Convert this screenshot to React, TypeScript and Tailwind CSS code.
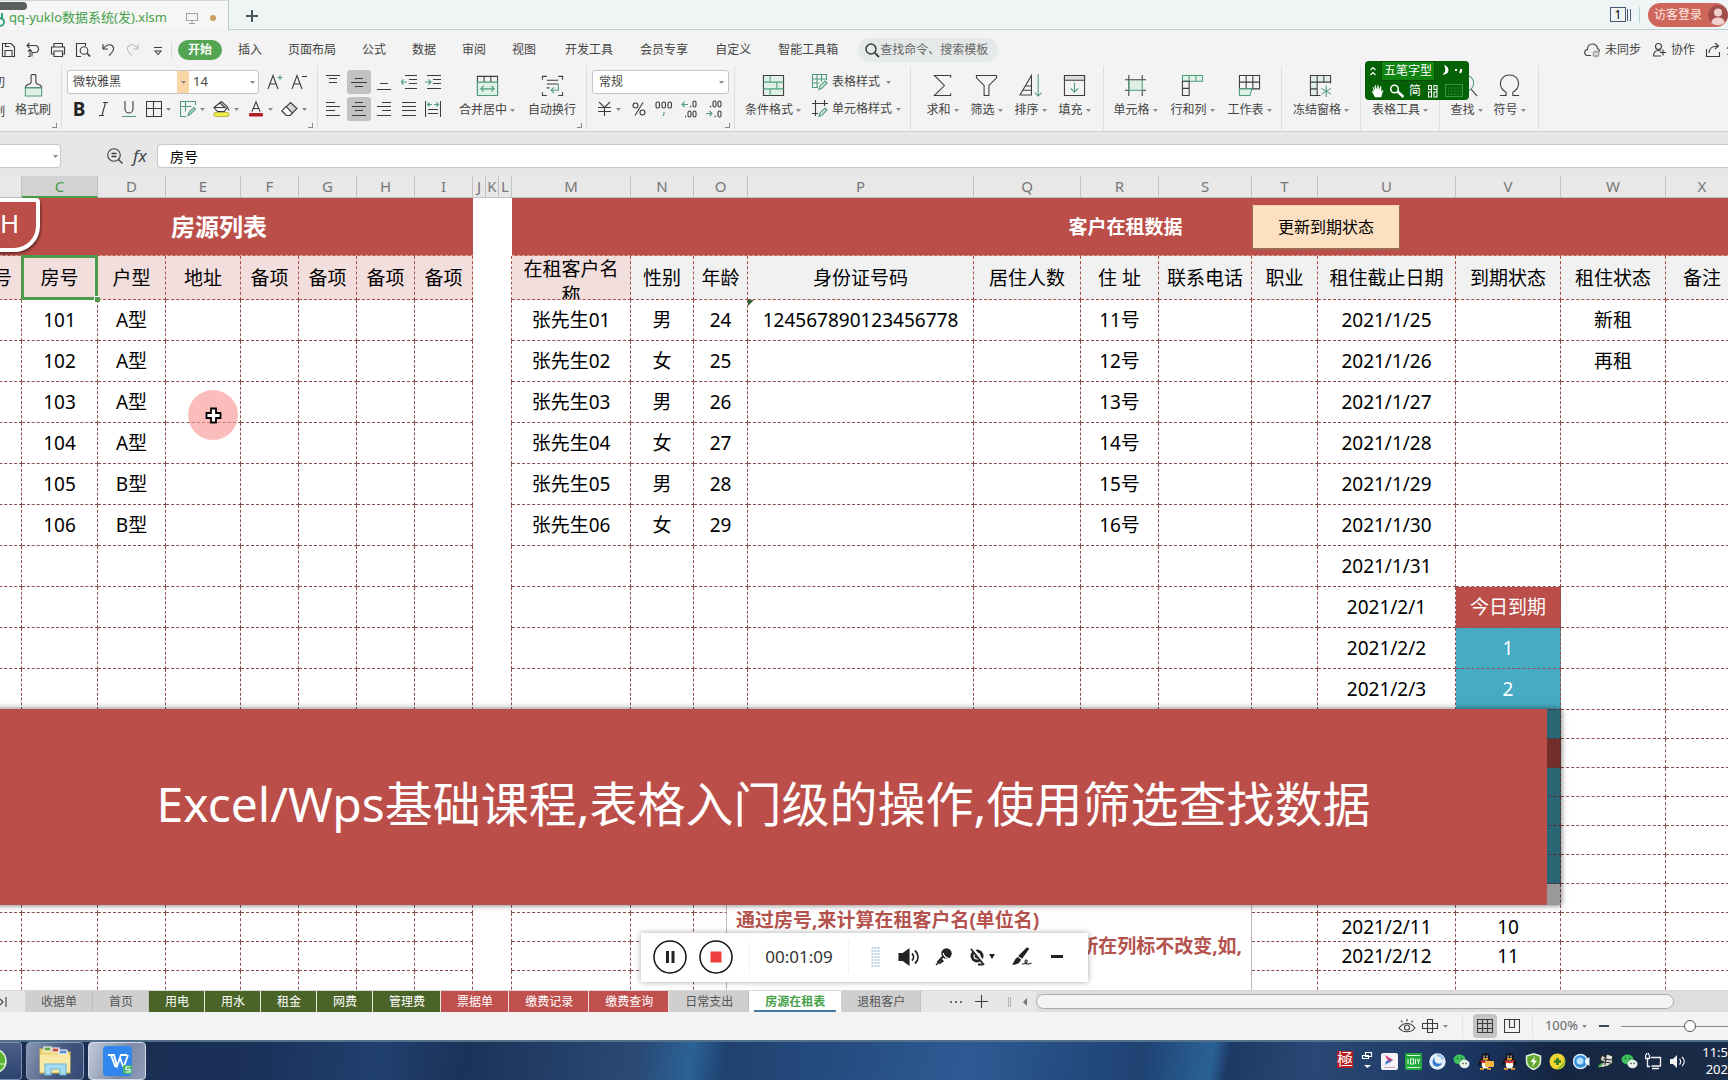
import type { ReactNode } from "react";
import { clsx } from "clsx";

const INK = "#3c3c3c";
const GREEN = "#4f9d7c";
const MINT = "#dff0e6";

type IconProps = {
  w?: number;
  h?: number;
  box?: string;
  className?: string;
  children: ReactNode;
};

function Icon({ w = 16, h = w, box, className, children }: IconProps) {
  return (
    <svg
      width={w}
      height={h}
      viewBox={box ?? `0 0 ${w} ${h}`}
      fill="none"
      stroke={INK}
      strokeWidth={1.1}
      className={clsx("shrink-0", className)}
      aria-hidden="true"
    >
      {children}
    </svg>
  );
}

function Caret({ className }: { className?: string }) {
  return (
    <svg width="5" height="3" viewBox="0 0 5 3" className={clsx("shrink-0", className)} aria-hidden="true">
      <path d="M0 0h5L2.5 3z" fill="#8a8a8a" />
    </svg>
  );
}

/* ---------- title bar ---------- */

function TitleBar() {
  return (
    <header className="relative flex h-[30px] shrink-0 border-b border-[#bfd0d0] bg-[#eff5f5]">
      <div className="flex h-[30px] w-[229px] shrink-0 items-center border-r border-[#b5caca] border-t border-t-[#cfd8d8] bg-[#f5f6f5] pt-1">
        <Icon w={7} h={18}>
          <path d="M2 4v7" stroke="#35a587" strokeWidth={2} />
          <circle cx="0" cy="13" r="4" stroke="#35a587" strokeWidth={2} />
        </Icon>
        <span className="ml-0.5 text-[13px] text-[#45a049]">qq-yuklo数据系统(发).xlsm</span>
        <Icon w={12} h={12} className="ml-auto">
          <path d="M.5 1.500h11v7h-11zM6 8.500v3M3 11.500h6" stroke="#a3a3a3" />
        </Icon>
        <span className="mx-3 h-1.5 w-1.5 rounded-full bg-[#c8a262]" />
      </div>
      <button type="button" aria-label="新建" className="ml-[17px] flex items-center pt-0.5">
        <Icon w={12} h={12}>
          <path d="M6 0v12M0 6h12" stroke="#47575a" strokeWidth={2} />
        </Icon>
      </button>
      <div className="ml-auto flex items-center">
        <span className="flex h-[15px] w-4 items-center justify-center border border-[#47577a] text-[12px] leading-3">1</span>
        <span className="ml-px h-3 w-1 border-x border-[#47577a]" />
        <span className="mx-2 h-4 w-px bg-[#bcd3d6]" />
        <button
          type="button"
          className="flex h-6 w-20 items-center justify-between rounded-full bg-[#ce665c] pl-1.5 text-[12px] text-[#ffe9e2]"
        >
          访客登录
          <Icon w={20} h={20}>
            <circle cx="10" cy="10" r="10" fill="#a14d4b" stroke="none" />
            <circle cx="10" cy="7.500" r="4" fill="#efd0cc" stroke="none" />
            <path d="M3.500 18c0-4 3-5.500 6.500-5.500s6.500 1.500 6.500 5.500c-4 3-9 3-13 0z" fill="#efd0cc" stroke="none" />
          </Icon>
        </button>
      </div>
      <span className="absolute left-0 top-0.5 h-2 w-[27px] rounded-r-md bg-[#5c5e60]" />
    </header>
  );
}

/* ---------- menu row ---------- */

const menusLeft = ["插入", "页面布局", "公式", "数据", "审阅", "视图"];
const menusRight = ["开发工具", "会员专享", "自定义", "智能工具箱"];

function QuickAccess() {
  return (
    <div className="flex w-[172px] shrink-0 items-center gap-[9px] border-r border-[#dcdcdc]">
      <Icon>
        <path d="M2.500 1.500h8.500l3.500 3.500v9.500h-12zM5 14.500v-6h7v6M5.500 1.500v3h4" />
      </Icon>
      <Icon>
        <path d="M2 3.500h8a3.500 3.500 0 0 1 0 7h-3v4M4.500 1l-2.500 2.500L4.500 6M3 9.500l2-2 2 2M5 8v6.500H3" />
      </Icon>
      <Icon>
        <path d="M4 5V1.500h8.500V5M4 12H1.500V5h13v7H12M4 9h8.500v5.500H4z" />
      </Icon>
      <Icon>
        <path d="M6 14.500H1.500v-13h9V4" />
        <circle cx="9" cy="8.500" r="3.800" />
        <path d="M12 11l3 3.500" strokeWidth={1.600} />
      </Icon>
      <Icon>
        <path d="M3 2v5h5M3 7c3-4 7-5.500 9.500-3s.5 6-3.500 9.500" />
      </Icon>
      <Icon>
        <path d="M13 2v5H8M13 7C10 3 6 1.500 3.500 4s-.5 6 3.500 9.500" stroke="#bdbdbd" />
      </Icon>
      <Icon>
        <path d="M4 5.500h8M5 9l3 3.500L11 9z" />
      </Icon>
    </div>
  );
}

function MenuRow() {
  return (
    <nav className="flex h-9 shrink-0 items-center pt-[3px] text-[12px] text-[#444]">
      <QuickAccess />
      <button type="button" className="ml-1.5 h-5 w-11 rounded-full bg-[#53a551] font-bold text-white">
        开始
      </button>
      <div className="ml-4 flex gap-[26px]">
        {menusLeft.map((menu) => (
          <button key={menu} type="button">{menu}</button>
        ))}
      </div>
      <div className="ml-[29px] flex gap-[27px]">
        {menusRight.map((menu) => (
          <button key={menu} type="button">{menu}</button>
        ))}
      </div>
      <label className="ml-5 flex h-6 w-[140px] items-center rounded-full bg-[#e6e9e9] pl-1.5">
        <Icon w={16}>
          <circle cx="7" cy="7" r="5" strokeWidth={1.500} />
          <path d="M11 11l4 4" strokeWidth={1.800} />
        </Icon>
        <input
          type="text"
          aria-label="搜索"
          placeholder="查找命令、搜索模板"
          className="w-[112px] bg-transparent outline-none placeholder:text-[#666]"
        />
      </label>
      <div className="ml-auto flex items-center">
        <Icon w={17} h={16}>
          <path d="M7 13.500H4a3 3 0 0 1-.5-6C3.500 4 5.500 2 8.500 2s5 2 5 4.500c1.500.5 2 2 1.500 3.500" />
          <circle cx="12" cy="12" r="3.500" fill="#a9adb0" stroke="none" />
          <path d="M10 12h4" stroke="#fff" />
        </Icon>
        <button type="button" className="ml-1">未同步</button>
        <Icon w={15} h={16} className="ml-[11px]">
          <circle cx="6.500" cy="4.500" r="3" />
          <path d="M9 14H1.500c0-4 2-5.500 5-5.500 1 0 2 .2 2.500.7M11 7.500v6M8 10.500h6" />
        </Icon>
        <button type="button" className="ml-1">协作</button>
        <button type="button" className="ml-2.5 flex w-[23px] items-center gap-1 overflow-hidden whitespace-nowrap">
          <Icon w={17} h={16}>
            <path d="M1.500 7v7.500h13V10M4 11c0-4 3-7 9-7M10 1l3.500 3L10 7" />
          </Icon>
          分
        </button>
      </div>
    </nav>
  );
}

/* ---------- ribbon ---------- */

function Group({ className, corner, children }: { className: string; corner?: boolean; children: ReactNode }) {
  return (
    <div className={clsx("relative flex h-16 shrink-0 border-r border-[#dedede] pt-1", className)}>
      {children}
      {corner ? <span className="absolute bottom-0.5 right-1 h-[5px] w-[5px] border-b border-r border-[#8a8a8a]" /> : null}
    </div>
  );
}

function BigButton({ label, caret = true, className, children }: { label: string; caret?: boolean; className?: string; children: ReactNode }) {
  return (
    <button type="button" className={clsx("flex h-[52px] shrink-0 flex-col items-center whitespace-nowrap pt-1", className)}>
      <Icon w={23} h={23} box="0 0 24 24">{children}</Icon>
      <span className="mt-[5px] flex h-4 items-center gap-[3px] leading-4">
        {label}
        {caret ? <Caret /> : null}
      </span>
    </button>
  );
}

function Tool({ label, caret, active, className, children }: { label: string; caret?: boolean; active?: boolean; className?: string; children: ReactNode }) {
  return (
    <button
      type="button"
      aria-label={label}
      className={clsx("flex h-6 shrink-0 items-center justify-center gap-1 rounded-[3px]", active && "bg-[#c2c2c2]", className)}
    >
      {children}
      {caret ? <Caret /> : null}
    </button>
  );
}

function Lines({ d }: { d: string }) {
  return (
    <Icon w={16} h={16}>
      <path d={d} />
    </Icon>
  );
}

function FontGroup() {
  return (
    <Group className="w-64 flex-col gap-[3px] pl-[5px]" corner>
      <div className="flex h-6 items-center">
        <div className="relative flex h-6 w-[192px] items-center rounded-[3px] border border-[#c6c6c6] bg-white">
          <select aria-label="字体" className="h-full w-[109px] appearance-none pl-[5px] outline-none">
            <option>微软雅黑</option>
          </select>
          <span className="flex h-full w-3 items-center justify-center bg-[#f9d6a4]">
            <Caret />
          </span>
          <select aria-label="字号" className="h-full flex-1 appearance-none pl-1 text-[13px] outline-none">
            <option>14</option>
          </select>
          <Caret className="mr-[3px]" />
        </div>
        <Tool label="增大字号" className="ml-1 w-6">
          <Icon w={16}>
            <path d="M1 15L6 1.500 11 15M3 10h6" />
            <path d="M13 1v5M10.500 3.500h5" stroke={GREEN} />
          </Icon>
        </Tool>
        <Tool label="减小字号" className="w-6">
          <Icon w={16}>
            <path d="M1 15L6 1.500 11 15M3 10h6" />
            <path d="M11 2.500h5" stroke={INK} />
          </Icon>
        </Tool>
      </div>
      <div className="flex h-6 items-center">
        <Tool label="加粗" className="w-6">
          <span className="text-[19px] font-bold leading-none text-[#222]">B</span>
        </Tool>
        <Tool label="倾斜" className="w-[26px]">
          <Icon w={14} h={16}>
            <path d="M6 1.500h5M2 14.500h5M8.500 1.500L5 14.500" />
          </Icon>
        </Tool>
        <Tool label="下划线" className="w-6">
          <Icon w={16} h={16}>
            <path d="M4 0v7.500a4 4.500 0 0 0 8 0V0" />
            <path d="M1 15.500h14" stroke={GREEN} />
          </Icon>
        </Tool>
        <Tool label="边框" caret className="w-[34px]">
          <Icon w={16}>
            <path d="M.5.500h15v15H.5zM7.500.5v15M.5 7.500h15" />
          </Icon>
        </Tool>
        <Tool label="绘图边框" caret className="w-[34px]">
          <Icon w={16}>
            <path d="M15.500 4V.5H.5v15H6M.5 5.500h11M5.500.5v10" stroke={GREEN} />
            <path d="M8 14.500l1-3 5-5 1.500 1.500-5 5z" fill={MINT} stroke={GREEN} />
          </Icon>
        </Tool>
        <Tool label="填充颜色" caret className="w-[34px]">
          <Icon w={17} h={16}>
            <path d="M1 6.500h11L6.500 1.500M1 6.500l7.500-6L14.500 6l-3 4.500h-7z" />
            <path d="M14.500 6.500l1.500 3" />
            <rect x="1" y="11.500" width="15" height="4" rx="1.500" fill="#f0ea45" stroke="#a7a63c" strokeWidth={0.800} />
          </Icon>
        </Tool>
        <Tool label="字体颜色" caret className="w-[34px]">
          <Icon w={16}>
            <path d="M4 10.500L8 .800l4 9.700M5.500 7.500h5" />
            <rect x="1" y="12" width="14" height="3.500" rx="1" fill="#b51f24" stroke="none" />
          </Icon>
        </Tool>
        <Tool label="清除" caret className="w-[34px]">
          <Icon w={17} h={16}>
            <path d="M9.500 1.500l6.500 6-7 7H5.500l-4.500-4.500z" fill="#d6d6d6" />
            <path d="M1 10L5 5.500l6.500 6.500-2.500 2.500H5.500z" fill="#fff" />
          </Icon>
        </Tool>
      </div>
    </Group>
  );
}

function AlignGroup() {
  return (
    <Group className="w-[269px]" corner>
      <div className="grid grid-cols-[29px_24px_25px_25px_24px] content-start gap-y-[3px]">
        <Tool label="顶端对齐"><Lines d="M1 1.500h14M4 4.500h8M4 8.500h8" /></Tool>
        <Tool label="垂直居中" active><Lines d="M4 4.500h8M0 8.500h16M4 12.500h8" /></Tool>
        <Tool label="底端对齐"><Lines d="M4 9.500h8M4 11.500h0M1 15.500h14" /></Tool>
        <Tool label="减少缩进">
          <Icon w={16}>
            <path d="M4 1.500h12M8 5.500h8M8 9.500h8M4 14.500h12" />
            <path d="M6 8H0M2.500 5.500L0 8l2.500 2.500" stroke={GREEN} />
          </Icon>
        </Tool>
        <Tool label="增加缩进">
          <Icon w={16}>
            <path d="M2 1.500h14M8 5.500h8M8 9.500h8M2 14.500h14" />
            <path d="M0 8h6M3.500 5.500L6 8l-2.500 2.500" stroke={GREEN} />
          </Icon>
        </Tool>
        <Tool label="左对齐"><Lines d="M1 1.500h9M1 5.500h14M1 9.500h9M1 14.500h14" /></Tool>
        <Tool label="水平居中" active><Lines d="M4 1.500h8M1 5.500h14M4 9.500h8M1 14.500h14" /></Tool>
        <Tool label="右对齐"><Lines d="M6 1.500h9M1 5.500h14M6 9.500h9M1 14.500h14" /></Tool>
        <Tool label="两端对齐"><Lines d="M1 1.500h14M1 5.500h14M1 9.500h14M1 14.500h14" /></Tool>
        <Tool label="分散对齐">
          <Icon w={16}>
            <path d="M.500 0v16M15.500 0v16M3 8.500h10M3 12.500h10" />
            <path d="M2.500 3.500H7M9 3.500h4.500M4.500 1.500l-2 2 2 2M11.500 1.500l2 2-2 2" stroke={GREEN} />
          </Icon>
        </Tool>
      </div>
      <BigButton label="合并居中" className="ml-2.5 w-16">
        <path d="M1.500 2.500h21v20h-21zM8.500 2.500v6M15.500 2.500v6" />
        <path d="M1.500 8.500h21v14h-21z" fill={MINT} stroke={GREEN} />
        <path d="M5 15.500h14M8 12.500l-3 3 3 3M16 12.500l3 3-3 3" stroke={GREEN} />
      </BigButton>
      <BigButton label="自动换行" caret={false} className="ml-1.5 w-[54px]">
        <path d="M6 2.500H1.500V6M18 2.500h4.500V6M6 22.500H1.500V19M18 22.500h4.500V19M6 6.500h12M6 10.500h12M6 14.500h3" />
        <path d="M18 10.500v6.500h-7M13.500 14L10.500 17l3 3" stroke={GREEN} />
      </BigButton>
    </Group>
  );
}

function NumberGroup() {
  return (
    <Group className="w-[148px] flex-col gap-[3px] pl-[5px]" corner>
      <div className="flex h-6 w-[137px] items-center rounded-[3px] border border-[#c6c6c6] bg-white pr-1">
        <select aria-label="数字格式" className="h-full flex-1 appearance-none pl-1.5 outline-none">
          <option>常规</option>
        </select>
        <Caret />
      </div>
      <div className="flex h-6 items-center">
        <Tool label="货币" caret className="w-[34px]">
          <Icon w={15} h={16}>
            <path d="M2 1l5.500 5.500L13 1M1 6.500h13M1 10.500h13M7.500 6.500V15" />
          </Icon>
        </Tool>
        <Tool label="百分比" className="w-[26px]">
          <Icon w={14} h={16}>
            <circle cx="3.500" cy="4.500" r="2.500" />
            <circle cx="10.500" cy="11.500" r="2.500" />
            <path d="M11 1.500L3 14.500" />
          </Icon>
        </Tool>
        <Tool label="千位分隔" className="w-6">
          <Icon w={18} h={16}>
            <rect x="1" y="1" width="3.500" height="6" rx="1.500" />
            <rect x="7" y="1" width="3.500" height="6" rx="1.500" />
            <rect x="13" y="1" width="3.500" height="6" rx="1.500" />
            <path d="M9 11v2l-1 2" stroke={GREEN} />
          </Icon>
        </Tool>
        <Tool label="增加小数" className="w-[26px]">
          <Icon w={17} h={18}>
            <path d="M7 4.500H1M3.500 2L1 4.500 3.500 7" stroke={GREEN} />
            <rect x="12" y="1" width="3" height="6" rx="1.500" />
            <rect x="7" y="11" width="3" height="6" rx="1.500" />
            <rect x="12" y="11" width="3" height="6" rx="1.500" />
            <path d="M9 6.500h1.200M4 16.500h1.200" strokeWidth={1.500} />
          </Icon>
        </Tool>
        <Tool label="减少小数" className="w-6">
          <Icon w={17} h={18}>
            <path d="M0 13.500h6M3.500 11L6 13.500 3.500 16" stroke={GREEN} />
            <rect x="7" y="1" width="3" height="6" rx="1.500" />
            <rect x="12" y="1" width="3" height="6" rx="1.500" />
            <rect x="12" y="11" width="3" height="6" rx="1.500" />
            <path d="M4 6.500h1.200M8.500 16.500h1.200" strokeWidth={1.500} />
          </Icon>
        </Tool>
      </div>
    </Group>
  );
}

function Ribbon() {
  return (
    <section className="flex h-[66px] shrink-0 items-start overflow-hidden border-b border-[#cfcfcf] text-[12px] text-[#444]">
      <Group className="w-[62px]" corner>
        <div className="flex w-[5px] flex-col justify-between overflow-hidden pb-2.5 pt-[5px] leading-4">
          <span className="flex justify-end">切</span>
          <span className="flex justify-end">制</span>
        </div>
        <BigButton label="格式刷" caret={false} className="ml-2.5 w-9">
          <path d="M3.500 14.500c0-2 1-3 3-3.500 2-.5 3-1 3-3V1.500C9.500 0 14.500 0 14.500 1.500V8c0 2 1 2.500 3 3s3 1.500 3 3.500z" />
          <path d="M3.500 14.500h17v8.500h-17z" fill={MINT} stroke={GREEN} />
        </BigButton>
      </Group>
      <FontGroup />
      <AlignGroup />
      <NumberGroup />
      <Group className="w-44 pl-2">
        <BigButton label="条件格式" className="w-[60px]">
          <path d="M1.500 1.500h21v21h-21z" fill={MINT} />
          <path d="M1.500 8.500h21M1.500 15.500h21M8.500 1.500v7M15.500 8.500v7M8.500 15.500v7" stroke={GREEN} />
        </BigButton>
        <div className="ml-2 flex flex-col gap-[3px]">
          <button type="button" className="flex h-6 items-center gap-1">
            <Icon w={17} h={18}>
              <path d="M15.500 7V1.500H1.500v13H7M1.500 6h14M1.500 10h7M6 1.500v13M10.500 1.500v7" stroke={GREEN} />
              <path d="M8 16.500l1-3.500 5-5 2 2-5 5z" fill={MINT} stroke={GREEN} />
            </Icon>
            表格样式
            <Caret className="ml-0.5" />
          </button>
          <button type="button" className="flex h-6 items-center gap-1">
            <Icon w={17} h={18}>
              <path d="M4.500 0v16M1 3.500h16M13.500 0v6M1 13.500h6" />
              <path d="M8 16.500l1-3.500 5-5 2 2-5 5z" fill={MINT} stroke={GREEN} />
            </Icon>
            单元格样式
            <Caret />
          </button>
        </div>
      </Group>
      <Group className="w-[193px] gap-[11px] pl-[15px]">
        <BigButton label="求和" className="w-[33px]">
          <path d="M20.500 4V1.500H3.500L14 12 3.500 22.500h17V20" />
        </BigButton>
        <BigButton label="筛选" className="w-[33px]">
          <path d="M1.500 1.500h21V4l-8 8v10.500h-5V12l-8-8z" />
        </BigButton>
        <BigButton label="排序" className="w-[33px]">
          <path d="M1 22L13 1.500V22zM6.500 12.500H13M4 17h9" />
          <path d="M20 0v23M16.500 19.500L20 23l3.500-3.500" stroke={GREEN} />
        </BigButton>
        <BigButton label="填充" className="w-[33px]">
          <path d="M1.500 1.500h21v21h-21z" />
          <path d="M1.500 1.500h21v5h-21z" fill="#dcdcdc" />
          <path d="M12 9v10M8 15l4 4 4-4" stroke={GREEN} />
        </BigButton>
      </Group>
      <Group className="w-[178px] gap-3 pl-[9px]">
        <BigButton label="单元格" className="w-[45px]">
          <path d="M5 6h14v11H5z" fill={MINT} stroke="none" />
          <path d="M5 1v22M19 1v5M19 17v6M1 6h22M1 17h4M19 17h4" />
          <path d="M5 6v11h14V6" stroke={GREEN} />
        </BigButton>
        <BigButton label="行和列" className="w-[45px]">
          <path d="M1.500 1.500h21v6h-21z" fill={MINT} stroke={GREEN} />
          <path d="M8.500 1.500v6M15.500 1.500v6" stroke={GREEN} />
          <path d="M1.500 7.500h7v15h-7zM1.500 15h7" />
        </BigButton>
        <BigButton label="工作表" className="w-[45px]">
          <path d="M1.500 1.500h21v14h-21zM1.500 8.500h21M8.500 1.500v14M15.500 1.500v14" />
          <path d="M1.500 15.500h13l-2 7h-11z" fill={MINT} stroke={GREEN} />
        </BigButton>
      </Group>
      <Group className="w-[79px] justify-center">
        <BigButton label="冻结窗格">
          <path d="M1.500 1.500h21v7H8.500v14h-7z" fill={MINT} stroke="none" />
          <path d="M22.500 10v-8.500h-21v21H12M1.500 8.500h21M8.500 1.500v21M15.500 1.500v7M1.500 15.500h7" />
          <path d="M18 12v12M13 15l10 6M23 15l-10 6" stroke={GREEN} />
        </BigButton>
      </Group>
      <Group className="w-[79px] justify-center">
        <BigButton label="表格工具">
          <path d="M1.500 1.500h21v21h-21zM1.500 8.500h21M8.500 1.500v21" />
        </BigButton>
      </Group>
      <Group className="w-[99px] gap-2.5 pl-2.5">
        <BigButton label="查找" className="w-[33px]">
          <circle cx="11" cy="9.500" r="8.500" stroke={GREEN} />
          <path d="M17 16l6 7" />
        </BigButton>
        <BigButton label="符号" className="w-[33px]">
          <path d="M2 22.500h6.500V19C4.500 17 2.500 14 2.500 10 2.500 4.500 6.500 1 12 1s9.500 3.500 9.500 9c0 4-2 7-6 9v3.500H22" />
        </BigButton>
      </Group>
    </section>
  );
}

/* Floating input-method bar */
function InputMethodBar() {
  return (
    <aside className="absolute left-[1365px] top-[61px] h-[39px] w-[104px] rounded-sm bg-[#056105] text-[12px] text-white">
      <div className="flex h-5 items-center">
        <Icon w={16} h={14}>
          <path d="M5.500 6L8 3.500 10.500 6M5.500 11L8 8.500l2.500 2.500" stroke="#fff" />
        </Icon>
        <span className="flex h-5 w-[54px] items-center justify-center border border-[#0a4d0a] bg-[#118411]">五笔字型</span>
        <Icon w={32} h={14}>
          <path d="M10 2c4 2 4 7-1 8 2-2 2.500-5 1-8z" fill="#fff" stroke="#fff" />
          <path d="M20 6h2M26 5v2l-1 2" stroke="#fff" strokeWidth={2} />
        </Icon>
      </div>
      <div className="flex h-[19px] items-center gap-1 pl-1.5">
        <Icon w={14} h={14}>
          <path d="M4 13L1 7l2 1-1-5 2 4V1l2 5 1-5 1 5 2-4v6l2-2-2 7z" fill="#fff" stroke="#fff" strokeWidth={0.500} />
        </Icon>
        <Icon w={16} h={14}>
          <circle cx="5.500" cy="5" r="3.800" stroke="#fff" strokeWidth={1.500} />
          <path d="M8.500 7.500L14.500 13" stroke="#fff" strokeWidth={2.500} />
        </Icon>
        <span className="leading-none">简</span>
        <Icon w={12} h={14} className="ml-0.5">
          <path d="M1.500 1.500h3v4h-3zM7 1.500h3v4H7zM1.500 8h3v5h-3zM7 8h3v5H7zM4.500 5.500V8M10 5.500V8" stroke="#fff" />
        </Icon>
        <Icon w={18} h={13} className="ml-0.5">
          <path d="M.5.500h17v12H.5z" stroke="#2f9a3c" />
          <path d="M3 4h13M3 7h13M3 10h13" stroke="#2f9a3c" strokeDasharray="1.500 1.500" />
        </Icon>
      </div>
    </aside>
  );
}

/* ---------- formula bar ---------- */

function FormulaBar() {
  return (
    <div className="flex h-11 shrink-0 items-start bg-[#e7e7e7] pt-3">
      <div className="flex h-6 w-[61px] items-center justify-end rounded-r border border-l-0 border-[#c8c8c8] bg-white pr-0.5">
        <Caret />
      </div>
      <Icon w={18} h={24} className="ml-[45px]">
        <circle cx="8" cy="11" r="6.300" />
        <path d="M5.500 9.500h5M5.500 12.500h5M12.500 15.500l4 4" strokeWidth={1.400} />
      </Icon>
      <span className="ml-[9px] w-6 text-[17px] italic leading-6 text-[#444]">fx</span>
      <input
        type="text"
        aria-label="编辑栏"
        defaultValue="房号"
        className="h-6 min-w-0 flex-1 rounded-l border border-r-0 border-[#c8c8c8] bg-white pl-3 text-[14px] text-black outline-none"
      />
    </div>
  );
}

/* ---------- sheet ---------- */

const columns: { id: string; width: string }[] = [
  { id: "B", width: "w-[57px]" },
  { id: "C", width: "w-[76px]" },
  { id: "D", width: "w-[68px]" },
  { id: "E", width: "w-[75px]" },
  { id: "F", width: "w-[58px]" },
  { id: "G", width: "w-[58px]" },
  { id: "H", width: "w-[58px]" },
  { id: "I", width: "w-[58px]" },
  { id: "J", width: "w-[13px]" },
  { id: "K", width: "w-[13px]" },
  { id: "L", width: "w-[13px]" },
  { id: "M", width: "w-[119px]" },
  { id: "N", width: "w-[63px]" },
  { id: "O", width: "w-[54px]" },
  { id: "P", width: "w-[226px]" },
  { id: "Q", width: "w-[107px]" },
  { id: "R", width: "w-[78px]" },
  { id: "S", width: "w-[93px]" },
  { id: "T", width: "w-[66px]" },
  { id: "U", width: "w-[138px]" },
  { id: "V", width: "w-[105px]" },
  { id: "W", width: "w-[105px]" },
  { id: "X", width: "w-[73px]" },
];

const headings: Record<string, string> = {
  B: "号",
  C: "房号",
  D: "户型",
  E: "地址",
  F: "备项",
  G: "备项",
  H: "备项",
  I: "备项",
  M: "在租客户名称",
  N: "性别",
  O: "年龄",
  P: "身份证号码",
  Q: "居住人数",
  R: "住 址",
  S: "联系电话",
  T: "职业",
  U: "租住截止日期",
  V: "到期状态",
  W: "租住状态",
  X: "备注",
};

type Row = Record<string, string>;

const tallRows: Row[] = [
  { C: "101", D: "A型", M: "张先生01", N: "男", O: "24", P: "124567890123456778", R: "11号", U: "2021/1/25", W: "新租" },
  { C: "102", D: "A型", M: "张先生02", N: "女", O: "25", R: "12号", U: "2021/1/26", W: "再租" },
  { C: "103", D: "A型", M: "张先生03", N: "男", O: "26", R: "13号", U: "2021/1/27" },
  { C: "104", D: "A型", M: "张先生04", N: "女", O: "27", R: "14号", U: "2021/1/28" },
  { C: "105", D: "B型", M: "张先生05", N: "男", O: "28", R: "15号", U: "2021/1/29" },
  { C: "106", D: "B型", M: "张先生06", N: "女", O: "29", R: "16号", U: "2021/1/30" },
  { U: "2021/1/31" },
  { U: "2021/2/1", V: "今日到期", fill: "red" },
  { U: "2021/2/2", V: "1", fill: "teal" },
  { U: "2021/2/3", V: "2", fill: "teal" },
];

const shortRows: Row[] = [
  { fill: "teal" },
  { fill: "red" },
  { fill: "teal" },
  { fill: "teal" },
  { fill: "teal" },
  { fill: "teal" },
  { U: "2021/2/10" },
  { U: "2021/2/11", V: "10" },
  { U: "2021/2/12", V: "11" },
  {},
];

const isGap = (id: string) => id === "J" || id === "K" || id === "L";

function BodyRow({ row, tall }: { row: Row; tall?: boolean }) {
  return (
    <tr className={tall ? "h-[41px]" : "h-[29px]"}>
      {columns.map(({ id }) => (
        <td
          key={id}
          className={clsx(
            "border-dashed border-[#8d4f4d] p-0 text-center",
            !isGap(id) && "border-b border-r",
            id === "L" && "border-r",
            id === "P" && row.P && "relative",
            id === "V" && row.fill === "red" && "bg-[#bc4e49] text-white",
            id === "V" && row.fill === "teal" && "bg-[#48abc4] text-white",
          )}
        >
          {id === "P" && row.P ? (
            <svg width="6" height="6" viewBox="0 0 6 6" className="absolute left-0 top-0" aria-hidden="true">
              <path d="M0 0h6L0 6z" fill="#2c6a32" />
            </svg>
          ) : null}
          {row[id]}
        </td>
      ))}
    </tr>
  );
}

function SheetTable() {
  return (
    <table className="-ml-[35px] w-[1774px] table-fixed border-separate border-spacing-0 text-[19px] leading-6 text-black">
      <colgroup>
        {columns.map(({ id, width }) => (
          <col key={id} className={width} />
        ))}
      </colgroup>
      <thead>
        <tr className="h-[22px] text-[15px] leading-5 text-[#777]">
          {columns.map(({ id }) => (
            <th
              key={id}
              scope="col"
              className={clsx(
                "border-b border-r border-[#c2c2c2] p-0 align-top font-normal",
                id === "C" ? "border-b-2 border-b-[#4b9a49] bg-[#d2d2d2] text-[#459a48]" : "bg-[#e8e8e8]",
              )}
            >
              {id === "B" ? null : id}
            </th>
          ))}
        </tr>
      </thead>
      <tbody>
        <tr className="h-[58px] bg-[#bc4e49] text-white">
          <th colSpan={8} className="border-b border-dashed border-[#d9a19e] p-0 text-[24px]">房源列表</th>
          <td colSpan={3} className="bg-white p-0" />
          <th colSpan={12} className="border-b border-dashed border-[#d9a19e] p-0">客户在租数据</th>
        </tr>
        <tr className="h-11">
          {columns.map(({ id }, index) => (
            <th
              key={id}
              className={clsx(
                "border-dashed border-[#a8504d] p-0 font-normal",
                !isGap(id) && "border-b border-r",
                id === "L" && "border-r",
                (index < 8 || id === "M") && "bg-[#f2dedc]",
                index > 11 && "bg-[#f1f1f2]",
                id === "C" && "relative",
                id === "B" && "pr-[9px] text-right",
              )}
            >
              {id === "M" ? <div className="h-[43px] overflow-hidden px-2 leading-[26px]">{headings.M}</div> : headings[id]}
              {id === "C" ? (
                <>
                  <span className="absolute -inset-px border-[3px] border-[#4f9a4d]" />
                  <span className="absolute -bottom-[3px] -right-[3px] h-[6px] w-[6px] border-l border-t border-white bg-[#4f9a4d]" />
                </>
              ) : null}
            </th>
          ))}
        </tr>
        {tallRows.map((row, index) => (
          <BodyRow key={index} row={row} tall />
        ))}
        {shortRows.map((row, index) => (
          <BodyRow key={index} row={row} />
        ))}
      </tbody>
    </table>
  );
}

function Recorder() {
  return (
    <div className="absolute left-[641px] top-[757px] flex h-[49px] w-[447px] items-center bg-white pb-0.5 pl-3 shadow-[0_0_6px_rgba(0,0,0,0.35)]">
      <button type="button" aria-label="暂停">
        <Icon w={34} h={34}>
          <circle cx="17" cy="17" r="16" stroke="#111" strokeWidth={1.500} />
          <path d="M14.500 11v12M20 11v12" stroke="#222" strokeWidth={3} />
        </Icon>
      </button>
      <button type="button" aria-label="停止" className="ml-3">
        <Icon w={34} h={34}>
          <circle cx="17" cy="17" r="16" stroke="#111" strokeWidth={1.500} />
          <rect x="11.500" y="11.500" width="11" height="11" fill="#ee3f3f" stroke="none" />
        </Icon>
      </button>
      <span className="ml-4 flex h-8 w-[100px] items-center justify-center border-x border-[#f2f2f2] text-[17px] text-[#333]">
        00:01:09
      </span>
      <Icon w={9} h={20} className="ml-[22px]">
        <path d="M1.500 0v20M4.500 0v20M7.500 0v20" stroke="#bcd3e3" strokeWidth={2} strokeDasharray="2 1" />
      </Icon>
      <button type="button" aria-label="扬声器" className="ml-[18px]">
        <Icon w={22} h={20}>
          <path d="M1 6.500h4L11 2v16l-6-4.500H1z" fill="#222" stroke="#222" />
          <path d="M14 6.500c2 2 2 5 0 7M17 3.500c4 4 4 9 0 13" stroke="#222" strokeWidth={1.800} />
        </Icon>
      </button>
      <button type="button" aria-label="麦克风" className="ml-3.5">
        <Icon w={20} h={20}>
          <circle cx="12.500" cy="6.500" r="5.200" fill="#222" stroke="none" />
          <path d="M9 6c1 3 3 5 6 5.500" stroke="#fff" />
          <path d="M9 9.500L3.500 15.500M6.500 12l2 2-3.500 2.500" stroke="#222" strokeWidth={2} />
          <path d="M2 18l3-3" stroke="#222" strokeWidth={1.500} />
        </Icon>
      </button>
      <button type="button" aria-label="摄像头" className="ml-3.5 flex items-center gap-0.5">
        <Icon w={19} h={20}>
          <circle cx="9" cy="9" r="6.500" fill="#222" stroke="none" />
          <circle cx="9" cy="9" r="3" stroke="#fff" />
          <path d="M10 17.500h5" stroke="#222" strokeWidth={2} />
          <path d="M4 1l13 17" stroke="#fff" strokeWidth={3.500} />
          <path d="M3 2l13 16" stroke="#222" strokeWidth={1.800} />
        </Icon>
        <svg width="6" height="5" viewBox="0 0 6 5" aria-hidden="true">
          <path d="M0 0h6L3 5z" fill="#222" />
        </svg>
      </button>
      <button type="button" aria-label="画笔" className="ml-4">
        <Icon w={22} h={20}>
          <path d="M16 1l1.500 1L11 11l-3-2z" fill="#222" stroke="#222" />
          <path d="M7 10l3 2.500C9 16 6 18 1 18c2-2 2-6 6-8z" fill="#222" stroke="none" />
          <path d="M11 17c4 0 6-2 5-3.500s-3 1-1.500 2.500 4 1 6 0" stroke="#222" />
        </Icon>
      </button>
      <button type="button" aria-label="最小化" className="ml-[18px] h-[3px] w-3 bg-[#222]" />
    </div>
  );
}

function Sheet() {
  return (
    <main className="relative min-h-0 flex-1 overflow-hidden bg-white">
      <SheetTable />
      <button
        type="button"
        className="absolute left-[1252px] top-[29px] h-[45px] w-[148px] border border-b-2 border-[#9d6a55] border-t-[#f3d3b4] bg-[#fce0c1] text-[16px] text-black"
      >
        更新到期状态
      </button>
      <div className="absolute -left-2 top-[22px] flex h-[54px] w-12 items-center rounded-br-[26px] rounded-tr border-4 border-white bg-[#bc4e49] pb-1 pl-1 text-[26px] text-white shadow-[1px_2px_3px_rgba(0,0,0,0.45)]">
        H
      </div>
      <div className="absolute left-[188px] top-[214px] flex h-[50px] w-[50px] items-center justify-center rounded-full bg-[#f98f8f]/60">
        <Icon w={17} h={17}>
          <path d="M6 1.500h5V6h4.500v5H11v4.500H6V11H1.500V6H6z" fill="#fff" stroke="#000" strokeWidth={1.800} />
        </Icon>
      </div>
      <div className="absolute left-[726px] top-[700px] h-[114px] w-[526px] border-x border-[#b9b9b9] bg-white px-[9px] pt-[31px] text-[19px] font-bold leading-[26px] text-[#b4524d]">
        <p>通过房号,来计算在租客户名(单位名)</p>
        <p className="text-right">所在列标不改变,如,</p>
      </div>
      <div className="absolute -left-5 top-[533px] h-[196px] w-[1581px] bg-black/40 pr-3.5 shadow-[0_0_6px_rgba(0,0,0,0.6)]">
        <div className="flex h-full items-center justify-center bg-[#bc4e49] pb-1.5 text-[48px] text-white">
          Excel/Wps基础课程,表格入门级的操作,使用筛选查找数据
        </div>
      </div>
      <Recorder />
    </main>
  );
}

/* ---------- sheet tabs and status bar ---------- */

const sheetTabs: { name: string; tone: "gray" | "olive" | "red" | "active" }[] = [
  { name: "收据单", tone: "gray" },
  { name: "首页", tone: "gray" },
  { name: "用电", tone: "olive" },
  { name: "用水", tone: "olive" },
  { name: "租金", tone: "olive" },
  { name: "网费", tone: "olive" },
  { name: "管理费", tone: "olive" },
  { name: "票据单", tone: "red" },
  { name: "缴费记录", tone: "red" },
  { name: "缴费查询", tone: "red" },
  { name: "日常支出", tone: "gray" },
  { name: "房源在租表", tone: "active" },
  { name: "退租客户", tone: "gray" },
];

const tones = {
  gray: "bg-[#cfcfcf] text-[#555] shadow-[inset_-1px_0_0_#bfbfbf]",
  olive: "bg-[#4a6427] text-white shadow-[inset_-1px_0_0_#e8eadf]",
  red: "bg-[#bf504d] text-white shadow-[inset_-1px_0_0_#f2dcdb]",
  active: "bg-white font-bold text-[#45a049]",
};

function SheetTabs() {
  return (
    <div className="flex h-[22px] shrink-0 items-stretch border-t border-[#d6d6d6] bg-[#e7e7e7] text-[12px]">
      <div className="flex w-[25px] shrink-0 items-center">
        <Icon w={8} h={12}>
          <path d="M0 3l3 3-3 3M6 1v10" />
        </Icon>
      </div>
      {sheetTabs.map((tab) => (
        <button key={tab.name} type="button" className={clsx("relative shrink-0 px-4 leading-5", tones[tab.tone])}>
          {tab.name}
          {tab.tone === "active" ? <span className="absolute inset-x-[5px] bottom-0 h-0.5 bg-[#447aa5]" /> : null}
        </button>
      ))}
      <div className="ml-[29px] flex shrink-0 items-center">
        <Icon w={13} h={4}>
          <path d="M0 2h2M5 2h2M10 2h2" strokeWidth={1.600} />
        </Icon>
        <Icon w={13} h={13} className="ml-3">
          <path d="M6.500 0v13M0 6.500h13" />
        </Icon>
        <span className="ml-5 h-2.5 w-[3px] border-x border-[#b3b3b3]" />
        <Icon w={5} h={8} className="ml-3">
          <path d="M4 0v8L0 4z" fill="#777" stroke="none" />
        </Icon>
      </div>
      <div className="ml-2 flex min-w-0 flex-1 items-center bg-[#dedede] pr-[54px]">
        <span className="h-[15px] flex-1 rounded-full border border-[#ababab] bg-[#f4f4f4]" />
      </div>
    </div>
  );
}

function StatusBar() {
  return (
    <footer className="flex h-7 shrink-0 items-center justify-end bg-[#f3f3f3] text-[13px] text-[#666]">
      <Icon w={18} h={16}>
        <path d="M1 10c4-6 12-6 16 0-4 5-12 5-16 0zM9 1v2.500M3 2.500l1.500 2M15 2.500l-1.500 2" />
        <circle cx="9" cy="9.500" r="2.500" />
      </Icon>
      <Icon w={17} h={16} className="ml-1.5">
        <path d="M5.500 1.500h5v13h-5zM.5 5.500h15v5H.5z" />
      </Icon>
      <Caret className="ml-1" />
      <span className="ml-3.5 h-6 w-px bg-[#e2e2e2]" />
      <button type="button" aria-label="普通视图" className="ml-2.5 flex h-6 w-6 items-center justify-center rounded-sm bg-[#c4c4c4]">
        <Icon w={16} h={14}>
          <path d="M.5.500h15v13H.5zM5.500.5v13M10.500.5v13M.5 4.500h15M.5 9.500h15" />
        </Icon>
      </button>
      <button type="button" aria-label="分页预览" className="ml-[7px]">
        <Icon w={16} h={14}>
          <path d="M.5.500h15v13H.5zM5.500.5V8.500h5V.5" />
        </Icon>
      </button>
      <span className="mx-3 h-6 w-px bg-[#e2e2e2]" />
      <span>100%</span>
      <Caret className="ml-1" />
      <span className="ml-3 h-0.5 w-2.5 bg-[#3a4b5c]" />
      <input
        type="range"
        aria-label="缩放"
        defaultValue={66}
        className="ml-3 h-4 w-[107px] appearance-none bg-transparent [&::-webkit-slider-runnable-track]:h-px [&::-webkit-slider-runnable-track]:bg-[#8a8a8a] [&::-webkit-slider-thumb]:-mt-1.5 [&::-webkit-slider-thumb]:h-3 [&::-webkit-slider-thumb]:w-3 [&::-webkit-slider-thumb]:appearance-none [&::-webkit-slider-thumb]:rounded-full [&::-webkit-slider-thumb]:border [&::-webkit-slider-thumb]:border-[#555] [&::-webkit-slider-thumb]:bg-white"
      />
    </footer>
  );
}

/* ---------- taskbar ---------- */

function WeChat() {
  return (
    <Icon w={17} h={17}>
      <ellipse cx="6.500" cy="6.500" rx="6" ry="5" fill="#3fbf5f" stroke="none" />
      <ellipse cx="11.500" cy="11" rx="5" ry="4.200" fill="#e8efe8" stroke="none" />
      <path d="M4.500 5.500h.1M8.500 5.500h.1M10 10.500h.1M13 10.500h.1" stroke="#245c33" strokeWidth={1.500} strokeLinecap="round" />
    </Icon>
  );
}

function Penguin({ chat }: { chat?: boolean }) {
  return (
    <Icon w={17} h={17}>
      <path d="M8.500 0C5 0 4 3 4 6c-2 2-3 4-3 6 1 1 2 0 2-1 1 5 10 5 11 0 0 1 1 2 2 1 0-2-1-4-3-6 0-3-1-6-4.500-6z" fill="#15151a" stroke="none" />
      <ellipse cx="8.500" cy="11.500" rx="3.800" ry="4" fill="#fff" stroke="none" />
      <path d="M4 8c3 1.500 6 1.500 9 0" stroke="#dc2f2f" strokeWidth={2} />
      <path d="M6.500 3.500h1M9.500 3.500h1" stroke="#fff" strokeWidth={2} />
      <path d="M6 5.800h5M3 15.800h4M10 15.800h4" stroke="#f1a524" strokeWidth={1.800} />
      {chat ? <rect x="8" y="8" width="9" height="6" rx="1" fill="#f5b944" stroke="none" /> : null}
    </Icon>
  );
}

function Tray() {
  return (
    <div className="ml-auto flex shrink-0 items-center gap-[7px]">
      <span className="mb-1 bg-[#b51d1d] text-[16px] leading-[17px] text-white">極</span>
      <Icon w={14} h={20}>
        <path d="M5.500 1.500h6v4h-6zM2.500 4.500h6v3h-6z" stroke="#fff" />
        <path d="M4 14h7l-3.500 3z" fill="#fff" stroke="none" />
      </Icon>
      <Icon w={17} h={17}>
        <rect width="17" height="17" rx="2" fill="#f4f4f8" stroke="none" />
        <path d="M4 2l8 5-4 3z" fill="#d43a76" stroke="none" />
        <path d="M12 7l-8 5 1-4z" fill="#3c79d8" stroke="none" />
        <path d="M3 14.500h11" stroke="#c9a8bf" />
      </Icon>
      <Icon w={17} h={17}>
        <rect width="17" height="17" rx="1" fill="#1faa3b" stroke="none" />
        <path d="M2 2.500h13M2 14.500h13M3 6v5M5.500 6h3v5h-3zM10.500 6v5M12 6l1.500 2L15 6M13.500 8v3" stroke="#dff5df" />
      </Icon>
      <Icon w={17} h={17}>
        <circle cx="8.500" cy="8.500" r="8.200" fill="#e4eef8" stroke="none" />
        <path d="M6 4c-2 5 2 8 7 6-1 4-7 5-9 1-1-2-.5-5 2-7z" fill="#3278cc" stroke="none" />
        <path d="M8 2.500c3-.5 5 1 6 4" stroke="#8dbbe6" strokeWidth={2} />
      </Icon>
      <WeChat />
      <Penguin chat />
      <Penguin />
      <Icon w={17} h={17}>
        <path d="M8.500.8L15.500 3v5c0 4-3 7-7 8.500C4.500 15 1.500 12 1.500 8V3z" fill="#5fa62f" stroke="#e7eedd" strokeWidth={1.500} />
        <path d="M10 3L5.500 9h3l-1.500 5L12 7.500H9z" fill="#fff" stroke="none" />
      </Icon>
      <Icon w={17} h={17}>
        <circle cx="8.500" cy="8.500" r="8" fill="#f0d42f" stroke="none" />
        <path d="M16 5c1 6-3 11-9 11 4-2 8-5 9-11z" fill="#6fb63c" stroke="none" />
        <path d="M8.500 5v7M5 8.500h7" stroke="#2f7d26" strokeWidth={2.500} />
      </Icon>
      <Icon w={17} h={17}>
        <circle cx="7.500" cy="8.500" r="7" fill="#3291dc" stroke="#d7eafa" strokeWidth={1.500} />
        <circle cx="7" cy="8" r="3.500" fill="#b9e0fa" stroke="none" />
        <path d="M12 7l4.500-3v9L12 10z" fill="#e8f3fb" stroke="none" />
      </Icon>
      <Icon w={17} h={17}>
        <path d="M5 2l3 2 2-3 6 2-1 4 1 3-5 3-4 1-6 1 3-4 3-2-4-2z" fill="#dedede" stroke="#222" />
        <path d="M6 6l8 1M8 9l6 1M9 3l-1 9" stroke="#222" />
        <path d="M1.500 14l4-3.500" stroke="#4dad4d" strokeWidth={2} />
      </Icon>
      <WeChat />
      <Icon w={17} h={17}>
        <path d="M6 4.500h9.500v8.500H6.500M7 15.500h7M.5 2v3.500h4V2M1.500 0v2M3.500 0v2M2.500 6v7.500H5" stroke="#f3f3f3" strokeWidth={1.300} />
      </Icon>
      <Icon w={17} h={17}>
        <path d="M1 6h3l4-4v13l-4-4H1z" fill="#f3f3f3" stroke="none" />
        <path d="M10.500 6c1.500 1.500 1.500 4 0 5.500M13 4c3 3 3 6 0 9" stroke="#f3f3f3" />
      </Icon>
      <div className="ml-2.5 flex w-[25px] flex-col items-end overflow-hidden text-[13px] leading-[17px] text-white">
        <span>11:5</span>
        <span>202</span>
      </div>
    </div>
  );
}

function Taskbar() {
  return (
    <div className="flex h-10 shrink-0 items-stretch overflow-hidden border-t-2 border-[#52708a] bg-[linear-gradient(100deg,#1b2c4f_0%,#1a3057_14%,#20406f_22%,#1b3358_27%,#2a4a75_37%,#2b6296_40%,#20416f_42%,#2d5a94_56%,#1f4272_66%,#2a6296_70%,#1d3a66_71%,#2a4875_76%,#1b3560_85%,#152642_90%,#1b2c49_100%)]">
      <div className="flex w-[22px] items-center rounded-r-sm border border-l-0 border-[#7d8fae] bg-[linear-gradient(#4c5f86,#2c4470)]">
        <Icon w={8} h={26}>
          <circle cx="-6" cy="13" r="12" fill="#5cb531" stroke="#e6f3dc" strokeWidth={1.500} />
          <path d="M0 16h6" stroke="#e6f3dc" />
        </Icon>
      </div>
      <button type="button" aria-label="资源管理器" className="ml-1 flex w-[58px] items-center justify-center rounded-sm border border-[#8b9cb8] bg-[linear-gradient(110deg,#8997b4,#41557d_60%,#344a76)]">
        <Icon w={34} h={30}>
          <path d="M2 3h9l2 3h19v21H2z" fill="#f2da7c" stroke="#d9b95a" />
          <path d="M6 1h7v4H6z" fill="#6ca646" stroke="#fff" />
          <path d="M14 2h7v4h-7z" fill="#c2503e" stroke="#fff" />
          <path d="M21 4h8v4h-8z" fill="#5f8ed0" stroke="#fff" />
          <path d="M2 9h30v17H2z" fill="#f8e9a4" stroke="none" />
          <path d="M7 29V18h21v11h-6v-6h-9v6z" fill="#a5dcf2" stroke="#6bb4d8" />
        </Icon>
      </button>
      <button type="button" aria-label="WPS 表格" className="ml-1 flex w-[58px] items-center justify-center rounded-sm border border-[#d4dae6] bg-[linear-gradient(110deg,#c3cbd9,#7d8ba8_60%,#8f9cb6)]">
        <Icon w={29} h={30}>
          <rect width="29" height="30" rx="4" fill="#2f86ec" stroke="none" />
          <path d="M5 9h6l3 11 4-11h6M8 9l4 11h2l3-8 3 8h1l4-11" stroke="#fff" strokeWidth={1.800} />
          <rect x="20" y="19" width="9" height="9" rx="1" fill="#47b36b" stroke="none" />
          <path d="M27 21h-4v2.500h4V26h-4.500" stroke="#fff" />
        </Icon>
      </button>
      <Tray />
    </div>
  );
}

export default function App() {
  return (
    <div className="relative flex h-screen flex-col overflow-hidden bg-[#f3f3f3] font-['Noto_Sans','Noto_Sans_CJK_SC',sans-serif]">
      <TitleBar />
      <MenuRow />
      <Ribbon />
      <FormulaBar />
      <Sheet />
      <SheetTabs />
      <StatusBar />
      <Taskbar />
      <InputMethodBar />
    </div>
  );
}
